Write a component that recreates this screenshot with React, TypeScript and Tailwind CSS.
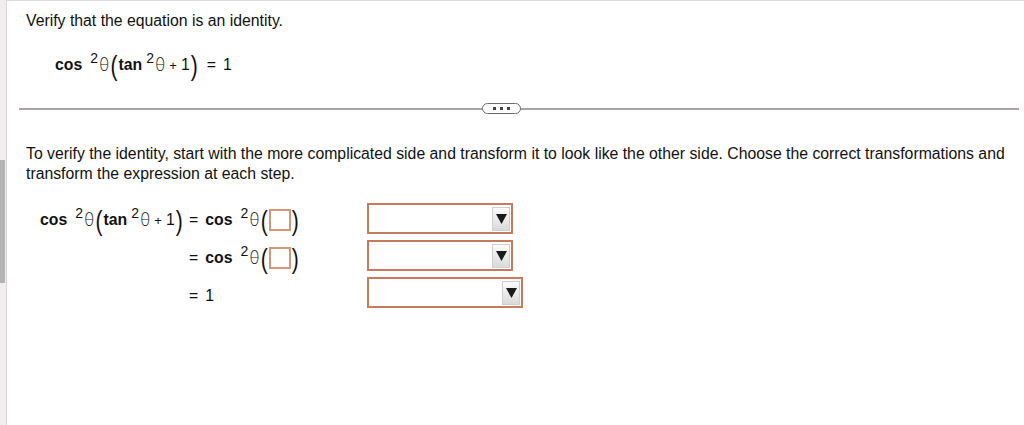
import React from "react";

const font = { fontFamily: '"Liberation Sans", Arial, sans-serif' };

function Sq({ ml }: { ml: string }) {
  return <span className={`${ml} text-[14px] font-normal relative -top-[7px] leading-none`}>2</span>;
}

function Theta() {
  return (
    <span className="text-[17px] leading-none ml-[1px]" style={{ fontFamily: '"DejaVu Sans", sans-serif', fontWeight: 300 }}>
      θ
    </span>
  );
}

function Paren({ c }: { c: string }) {
  return <span className="inline-block text-[21px] font-light leading-none scale-y-[1.3] mx-[1px]">{c}</span>;
}

function LeftSide() {
  return (
    <span className="inline-flex items-center whitespace-nowrap leading-none">
      <span className="font-bold">cos</span>
      <Sq ml="ml-[8px]" />
      <Theta />
      <Paren c="(" />
      <span className="font-bold">tan</span>
      <Sq ml="ml-[4px]" />
      <Theta />
      <span className="mx-[4px] text-[13px]">+</span>
      <span>1</span>
      <Paren c=")" />
    </span>
  );
}

function CosBox() {
  return (
    <span className="inline-flex items-center whitespace-nowrap leading-none">
      <span className="font-bold">cos</span>
      <Sq ml="ml-[8px]" />
      <Theta />
      <Paren c="(" />
      <span className="inline-block w-[22px] h-[22px] border-2 border-[#d9957a]" />
      <Paren c=")" />
    </span>
  );
}

function Dropdown({ w }: { w: string }) {
  return (
    <div className={`${w} h-[31px] border-2 border-[#c97a5c] bg-white flex items-center justify-end pr-[1px]`}>
      <div className="w-[18px] h-[24px] border border-[#cfcfcf] bg-gradient-to-b from-[#fbfbfb] to-[#dadada] flex items-center justify-center">
        <svg width="11" height="11" viewBox="0 0 11 11">
          <polygon points="0,1 11,1 5.5,11" fill="#1a1a1a" />
        </svg>
      </div>
    </div>
  );
}

export default function App() {
  return (
    <div className="w-[1024px] h-[425px] bg-white flex overflow-hidden text-[15.8px] text-[#111]" style={font}>
      <div className="w-[7px] h-full bg-[#efedef] border-r border-[#d9d5d5] flex flex-col shrink-0">
        <div className="h-[160px]" />
        <div className="h-[123px] w-[5px] bg-[#b4b4b4]" />
      </div>
      <div className="flex-1 border-t border-[#dcdcdc]">
        <div className="pl-[19px] pt-[10px] leading-[20px]">Verify that the equation is an identity.</div>
        <div className="pl-[48px] mt-[17px] flex items-center h-[34px]">
          <LeftSide />
          <span className="ml-[8px]">=</span>
          <span className="ml-[7px]">1</span>
        </div>
        <div className="mt-[26px] ml-[12px] mr-[5px] relative">
          <div className="h-[2px] bg-[#aaa3a3]" />
          <div className="absolute left-[463px] -top-[5px] w-[39px] h-[11px] rounded-full border border-[#6e6a6a] bg-white flex items-center justify-center gap-[4px]">
            <span className="w-[3px] h-[3px] bg-[#444]" />
            <span className="w-[3px] h-[3px] bg-[#444]" />
            <span className="w-[3px] h-[3px] bg-[#444]" />
          </div>
        </div>
        <div className="pl-[19px] pt-[34px] leading-[20px] pr-[6px]">
          To verify the identity, start with the more complicated side and transform it to look like the other side. Choose the correct transformations and transform the expression at each step.
        </div>
        <div className="flex pt-[17px] pl-[33px]">
          <div className="w-[327px] flex flex-col">
            <div className="h-[38px] flex items-center">
              <span className="w-[149px] flex">
                <LeftSide />
              </span>
              <span className="mr-[7px]">=</span>
              <CosBox />
            </div>
            <div className="h-[38px] flex items-center">
              <span className="w-[149px]" />
              <span className="mr-[7px]">=</span>
              <CosBox />
            </div>
            <div className="h-[38px] flex items-center">
              <span className="w-[149px]" />
              <span className="mr-[7px]">=</span>
              <span>1</span>
            </div>
          </div>
          <div className="flex flex-col gap-[6px] pt-[2px]">
            <Dropdown w="w-[146px]" />
            <Dropdown w="w-[146px]" />
            <Dropdown w="w-[156px]" />
          </div>
        </div>
      </div>
    </div>
  );
}
